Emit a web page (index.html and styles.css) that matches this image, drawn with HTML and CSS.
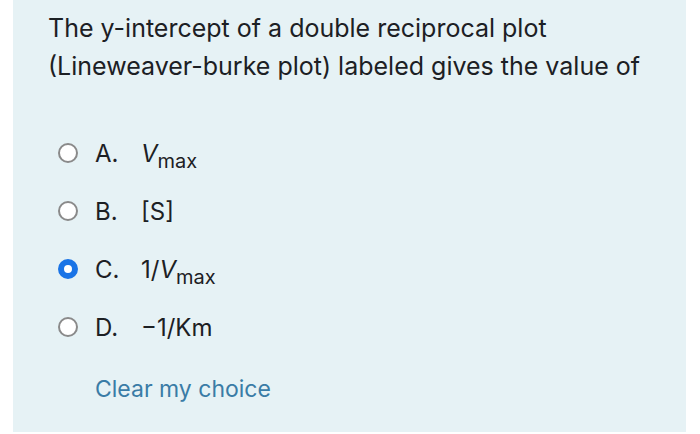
FILE: index.html
```html
<!DOCTYPE html>
<html lang="en">
<head>
    <meta charset="UTF-8">
    <title>Question</title>
    <link rel="stylesheet" href="styles.css">
</head>
<body>

    <div class="panel">
        <p class="question">The y-intercept of a double reciprocal plot<br>(Lineweaver-burke plot) labeled gives the value of</p>

        <div class="answers">
            <label class="answer">
                <span class="radio"></span>
                <span class="letter">A.</span>
                <span class="text"><i>V</i><sub>max</sub></span>
            </label>
            <label class="answer">
                <span class="radio"></span>
                <span class="letter">B.</span>
                <span class="text">[S]</span>
            </label>
            <label class="answer">
                <span class="radio checked"></span>
                <span class="letter">C.</span>
                <span class="text">1/<i>V</i><sub>max</sub></span>
            </label>
            <label class="answer">
                <span class="radio"></span>
                <span class="letter">D.</span>
                <span class="text">&minus;1/Km</span>
            </label>
        </div>

        <a href="#" class="clear">Clear my choice</a>
    </div>

</body>
</html>
```

FILE: styles.css
```css
/* БАЗА */
* { margin: 0; padding: 0; box-sizing: border-box; }
body { background: #ffffff; font-family: 'Inter', 'Liberation Sans', sans-serif; color: #1c2024; }

/* ПАНЕЛЬ ВОПРОСА */
.panel {
    margin-left: 13px;
    width: 673px;
    height: 432px;
    background: #e6f2f5;
    padding: 9px 0 0 35px;
}

.question { font-size: 25px; line-height: 38px; }

/* ВАРИАНТЫ */
.answers { margin-top: 39px; }

.answer {
    display: flex;
    align-items: center;
    height: 58px;
    padding-left: 10px;
    font-size: 24px;
}

.radio {
    width: 20px;
    height: 20px;
    border-radius: 50%;
    border: 2.5px solid #8a8a8a;
    background: #fff;
    flex-shrink: 0;
    margin-right: 17px;
}

.radio.checked { border: 6px solid #1a74e6; }

.letter { width: 46px; }

.text i { font-style: italic; }
.text sub { font-size: 20px; vertical-align: -6px; line-height: 0; }

.clear {
    display: block;
    margin: 4px 0 0 47px;
    line-height: 58px;
    font-size: 23px;
    color: #3a7ca6;
    text-decoration: none;
}
```
